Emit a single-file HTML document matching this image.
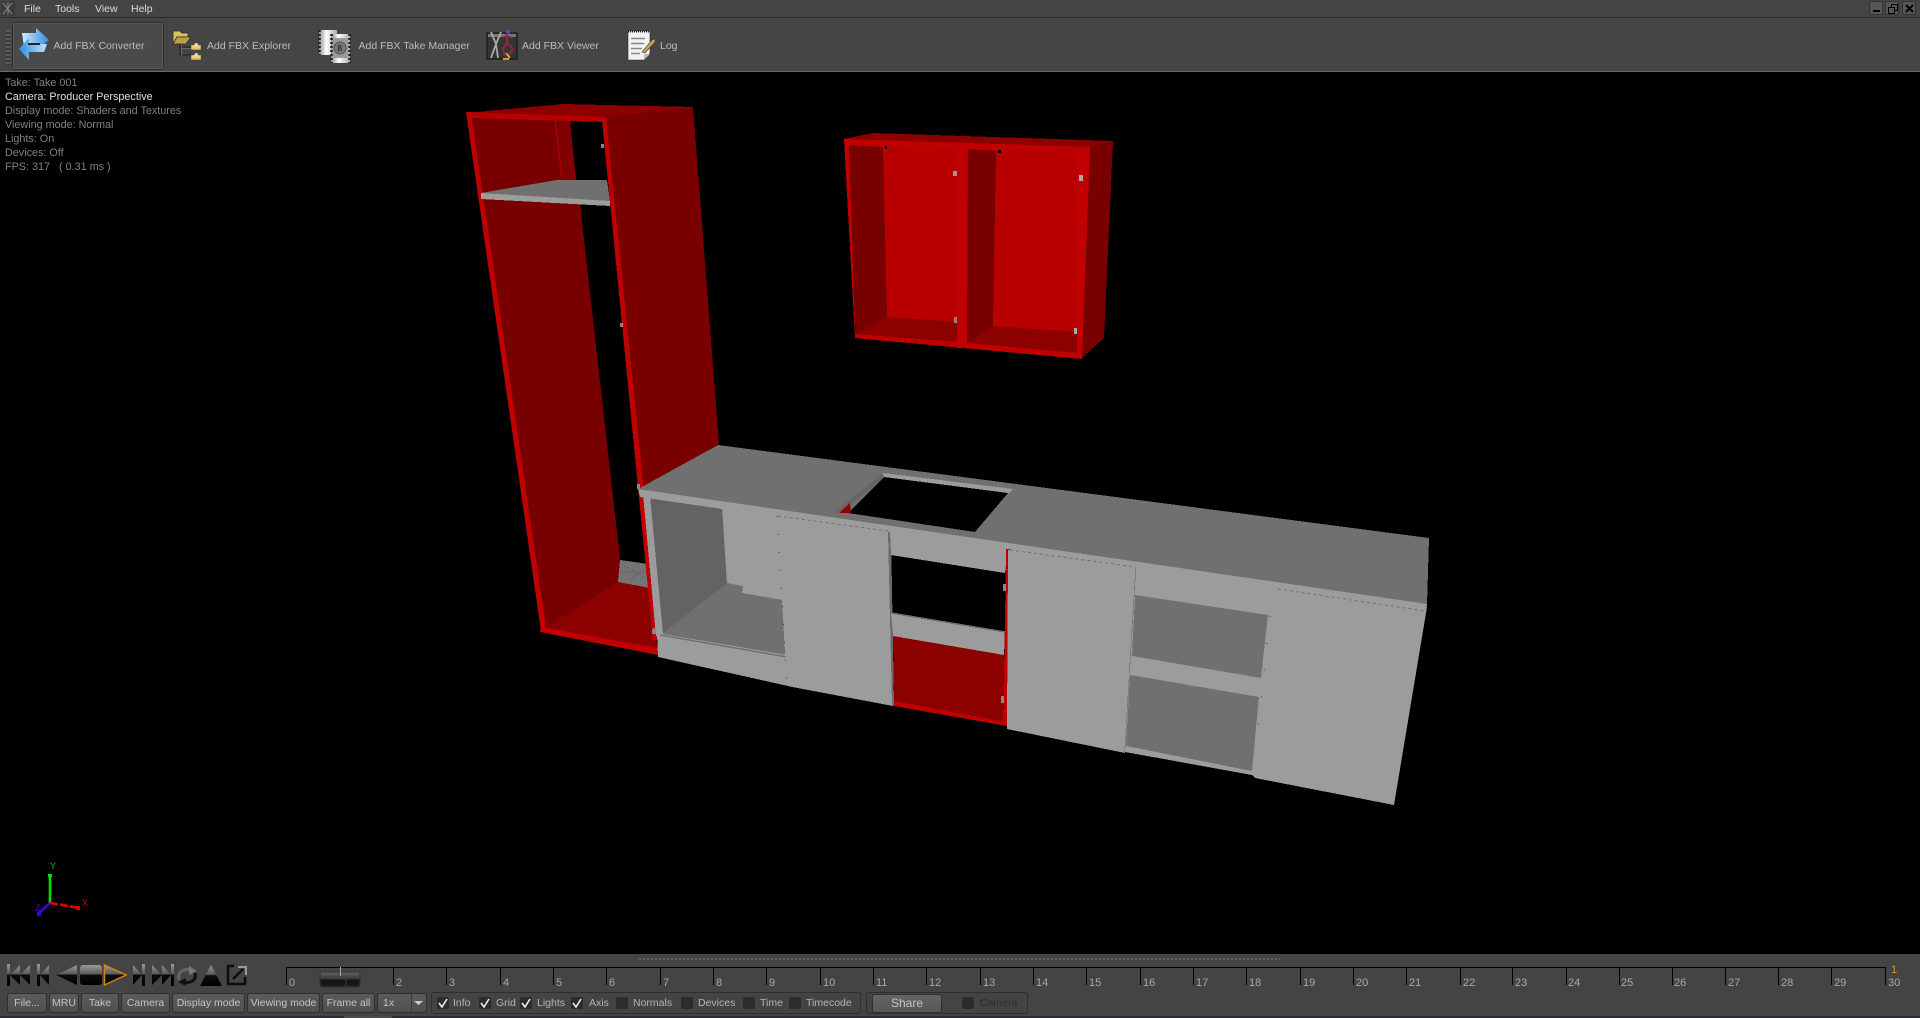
<!DOCTYPE html>
<html><head><meta charset="utf-8"><style>
html,body{margin:0;padding:0;width:1920px;height:1018px;overflow:hidden;background:#000}
body{position:relative;font:10.5px "Liberation Sans",sans-serif;color:#ccc}
.a{position:absolute}
.t{position:absolute;white-space:nowrap;line-height:14px;height:14px}
.btn{position:absolute;top:993px;height:18px;line-height:18px;text-align:center;background:linear-gradient(#5b5b5b,#505050);border:1px solid #2f2f2f;border-radius:3px;color:#c4c4c4;box-sizing:content-box}
.cb{position:absolute;top:997px;width:12px;height:12px;background:#2c2c2c;border-radius:2px}
.lb{position:absolute;top:996px;line-height:14px;color:#b4b4b4;white-space:nowrap}
.info{position:absolute;left:5px;line-height:14px;color:#808080;white-space:nowrap;font-size:10.8px}
.wb{position:absolute;top:1px;width:14px;height:14px;background:#565656;border:1px solid #333;border-radius:2px;box-sizing:border-box}
</style></head><body>
<!-- chrome backgrounds -->
<div class="a" style="left:0;top:0;width:1920px;height:17px;background:#444"></div>
<div class="a" style="left:0;top:17px;width:1920px;height:1px;background:#2c2c2c"></div>
<div class="a" style="left:0;top:18px;width:1920px;height:53px;background:#454545"></div>
<div class="a" style="left:0;top:71px;width:1920px;height:1px;background:#666"></div>
<div class="a" style="left:0;top:954px;width:1920px;height:62px;background:#444"></div>
<div class="a" style="left:0;top:1016px;width:1920px;height:2px;background:#2b2b33"></div>
<div class="a" style="left:344px;top:1016px;width:48px;height:2px;background:#4c4c4c"></div>

<!-- menu -->
<div class="t" style="left:24px;top:2px;color:#ddd">File</div>
<div class="t" style="left:55px;top:2px;color:#ddd">Tools</div>
<div class="t" style="left:95px;top:2px;color:#ddd">View</div>
<div class="t" style="left:131px;top:2px;color:#ddd">Help</div>

<!-- window buttons -->
<div class="wb" style="left:1869px"><div class="a" style="left:3px;top:8px;width:7px;height:2px;background:#000"></div></div>
<div class="wb" style="left:1885px"><div class="a" style="left:5px;top:2px;width:5px;height:5px;border:1px solid #000"></div><div class="a" style="left:2px;top:5px;width:5px;height:5px;border:1px solid #000;background:#565656"></div></div>
<div class="wb" style="left:1902px"><svg class="a" style="left:0;top:0" width="13" height="13"><path d="M3 3L10 10M10 3L3 10" stroke="#000" stroke-width="2"/></svg></div>

<!-- toolbar -->
<div class="a" style="left:12px;top:22px;width:150px;height:46px;border:1px solid #2e2e2e;outline:1px solid #585858;outline-offset:-2px;border-radius:3px;background:#4a4a4a"></div>
<div class="a" style="left:6px;top:30px;width:5px;height:36px;background:repeating-linear-gradient(#5a5a5a 0 2px,#3c3c3c 2px 4px)"></div>
<div class="t" style="left:53.500px;top:39px;color:#bbb">Add FBX Converter</div>
<div class="t" style="left:207px;top:39px;color:#bbb">Add FBX Explorer</div>
<div class="t" style="left:358.500px;top:39px;color:#bbb">Add FBX Take Manager</div>
<div class="t" style="left:522px;top:39px;color:#bbb">Add FBX Viewer</div>
<div class="t" style="left:660px;top:39px;color:#bbb">Log</div>

<svg class="a" style="left:0;top:0" width="700" height="72">
<defs>
<linearGradient id="bl" x1="0" y1="0" x2="1" y2="0"><stop offset="0" stop-color="#cfe8ff"/><stop offset="1" stop-color="#2f8fe0"/></linearGradient>
<linearGradient id="bl2" x1="0" y1="0" x2="1" y2="0"><stop offset="0" stop-color="#2f8fe0"/><stop offset="1" stop-color="#bfe0ff"/></linearGradient>
<linearGradient id="fy" x1="0" y1="0" x2="0" y2="1"><stop offset="0" stop-color="#fff3b0"/><stop offset="1" stop-color="#d9b84a"/></linearGradient>
<linearGradient id="fw" x1="0" y1="0" x2="1" y2="0"><stop offset="0" stop-color="#888"/><stop offset=".4" stop-color="#fff"/><stop offset="1" stop-color="#aaa"/></linearGradient>
</defs>
<!-- app icon -->
<rect x="1" y="1" width="14" height="15" fill="#3a3a3a"/><path d="M3 3L12 14M12 3L3 14M8 2V15" stroke="#888" stroke-width="1"/>
<!-- converter -->
<path d="M22 33H36V28L49 40L40 47H24Z" fill="url(#bl)"/>
<path d="M47 44L44 52H29V60L19 49L29 38V44Z" fill="url(#bl2)"/>
<rect x="28" y="43" width="12" height="2" fill="#222"/>
<!-- explorer -->
<path d="M173 41V31H180L182 33H188V37H177L174 43Z" fill="#d8bf60" stroke="#2a2a2a" stroke-width=".8"/>
<path d="M173 44L177 37H191L186 44Z" fill="#bfa040" stroke="#2a2a2a" stroke-width=".8"/>
<path d="M180 44V55H191M180 47H191" stroke="#1e1e1e" fill="none"/>
<path d="M180.500 44V55M181 47.500H191" stroke="#666" fill="none" transform="translate(1,1)"/>
<path d="M191 45H194L195 43H198V45H201V50H191Z" fill="url(#fy)" stroke="#444" stroke-width=".5"/>
<path d="M191 55H194L195 53H198V55H201V60H191Z" fill="url(#fy)" stroke="#444" stroke-width=".5"/>
<!-- take manager -->
<rect x="319" y="30" width="18" height="25" fill="url(#fw)"/>
<rect x="331" y="34" width="19" height="29" fill="url(#fw)"/>
<path d="M319.500 30V55M349.500 34V63M331.500 34V63" stroke="#222" stroke-width="2.500" stroke-dasharray="2 2"/>
<rect x="333" y="38" width="15" height="20" fill="#9a9a9a"/>
<circle cx="340" cy="48" r="6" fill="#777" stroke="#555"/>
<text x="337.500" y="51" font-size="8" fill="#111" font-family="Liberation Sans,sans-serif">8</text>
<!-- viewer -->
<rect x="487" y="33" width="30" height="26" fill="#343434" stroke="#111"/>
<rect x="488" y="34" width="28" height="3" fill="#787878"/>
<path d="M491 32L496 44L498 58M501 32L496 44L491 58" stroke="#a8a8a8" stroke-width="1.800" fill="none"/>
<path d="M507 34V43L503 49L505 56M507 43L513 49L508 56" stroke="#8a2a3a" stroke-width="2.200" fill="none"/>
<path d="M503 37L508 36L512 38" stroke="#8a2a3a" stroke-width="1.500" fill="none"/>
<circle cx="508" cy="32" r="2" fill="#2a60d8"/><path d="M503 59H509M506 53L510 58" stroke="#d8b030" stroke-width="1.800"/>
<!-- log -->
<path d="M628 31H650V53L644 60H628Z" fill="#f2f2f2" stroke="#2e2e2e" stroke-width=".6"/>
<path d="M628 31.500H650" stroke="#222" stroke-width="2" stroke-dasharray="1 1"/>
<path d="M631 38.500H645M631 43.500H644M631 48.500H642M631 53.500H640" stroke="#888" stroke-width="1.500"/>
<path d="M642 52L652 40L655 39L655 42L645 53Z" fill="#c9a45a" stroke="#4a3a20" stroke-width=".6"/>
<path d="M644 60V54H650Z" fill="#bbb"/>
</svg>

<!-- 3D viewport -->
<svg class="a" style="left:0;top:72px" width="1920" height="882" viewBox="0 72 1920 882" shape-rendering="crispEdges">
<!-- tall cabinet -->
<polygon points="466,113 563,104 693,107 606,118" fill="#8c0000"/>
<polygon points="468,116 570,120 576,181 481,195" fill="#780000"/>
<polygon points="570,120 576,180 562,180 555,120" fill="#800000"/>
<polygon points="479,197 580,204 620,559 618,582 545,630" fill="#780000"/>
<polygon points="620,560 648,564 650,588 618,582" fill="#747474"/>
<path d="M624 566L646 578M630 580L644 568M622 572L648 572" stroke="#555" stroke-width="1" stroke-dasharray="1 2"/>
<polygon points="618,582 650,588 658,653 542,630" fill="#8c0000"/>
<polygon points="605,117 693,107 719,444 643,488" fill="#7a0000"/>
<line x1="555" y1="120" x2="562" y2="179" stroke="#b80000" stroke-width="1"/>
<polygon points="466,112 605,117 606,122 470,118" fill="#b80000"/>
<polygon points="466,112 471,113 546,628 541,631" fill="#c00000"/>
<polygon points="541,627 658,648 658,655 540,632" fill="#c00000"/>
<polygon points="602,120 606,118 659,640 653,640" fill="#c00000"/>
<polygon points="481,193 557,180 607,180 610,201" fill="#707070"/>
<polygon points="481,193 610,201 610,206 481,199" fill="#9c9c9c"/>
<rect x="601" y="144" width="3" height="4" fill="#888"/><rect x="620" y="323" width="3" height="4" fill="#888"/><rect x="637" y="484" width="3" height="5" fill="#888"/><rect x="652" y="629" width="3" height="5" fill="#888"/>

<!-- upper cabinet -->
<polygon points="844,139 873,133 1113,141 1089,147" fill="#8c0000"/>
<polygon points="1089,147 1113,141 1104,338 1082,358" fill="#780000"/>
<polygon points="844,139 1090,147 1082,359 855,338" fill="#c00000"/>
<polygon points="884,146 908,147 1016,150 1089,147 1083,332 855,334" fill="#b80000"/>
<polygon points="849,145 883,147 887,317 855,334" fill="#780000"/>
<polygon points="855,334 887,317 957,322 957,342" fill="#8c0000"/>
<polygon points="968,149 996,151 993,326 967,343" fill="#780000"/>
<polygon points="967,343 993,326 1077,332 1077,353" fill="#8c0000"/>
<polygon points="956,143 964,143 964,348 957,348" fill="#c00000"/>
<polygon points="855,334 857,338 1080,358 1082,354 957,342" fill="#c00000"/>
<polygon points="1077,150 1090,147 1082,359 1077,358" fill="#c00000"/>
<rect x="953" y="171" width="4" height="5" fill="#999"/><rect x="1079" y="175" width="4" height="6" fill="#aaa"/><rect x="954" y="317" width="3" height="6" fill="#888"/><rect x="1074" y="328" width="3" height="6" fill="#aaa"/>
<rect x="885" y="146" width="2" height="3" fill="#000"/><rect x="998" y="150" width="3" height="3" fill="#000"/>

<!-- base cabinet -->
<polygon points="718,445 1429,538 1427,605 638,489" fill="#707070"/>
<!-- left compartment -->
<polygon points="648,496 724,505 780,514 784,602 727,590 668,632" fill="#9c9c9c"/>
<polygon points="648,496 722,506 727,584 660,636" fill="#636363"/>
<polygon points="727,583 743,586 742,593 783,600 788,658 662,634" fill="#707070"/>
<polygon points="643,494 650,496 663,634 656,636" fill="#9c9c9c"/>
<polygon points="657,633 787,655 788,686 658,657" fill="#9c9c9c"/>
<line x1="660" y1="635" x2="787" y2="657" stroke="#707070" stroke-width="1.500"/>
<polygon points="638,489 1427,604 1426,612 1136,570 777,517 640,497" fill="#9c9c9c"/>
<rect x="653" y="628" width="3" height="6" fill="#888"/>
<!-- hole -->
<polygon points="883,473 1013,489 1008,494 883,478" fill="#9c9c9c"/>
<polygon points="883,473 884,478 841,513 834,512" fill="#666"/>
<polygon points="884,477 1008,493 975,532 848,513" fill="#000"/>
<polygon points="839,513 850,503 851,513" fill="#8c0000"/>
<!-- door 1 -->
<polygon points="777,515 888,532 893,706 787,686" fill="#9c9c9c"/>
<polygon points="888,532 891,532 894,705 892,705" fill="#6b6b6b"/>
<line x1="778" y1="516" x2="888" y2="531" stroke="#707070" stroke-dasharray="3 3" stroke-width="1"/>
<line x1="777" y1="516" x2="787" y2="686" stroke="#444" stroke-dasharray="1 17" stroke-width="1"/>
<!-- middle -->
<polygon points="890,532 1008,549 1005,573 891,555" fill="#9c9c9c"/>
<polygon points="891,613 1005,632 1004,655 893,636" fill="#9c9c9c"/>
<line x1="891" y1="613" x2="1005" y2="632" stroke="#707070" stroke-width="1.500"/>
<polygon points="893,636 1004,655 1003,722 894,701" fill="#8c0000"/>
<polygon points="894,701 1006,722 1007,726 894,706" fill="#c00000"/>
<polygon points="1006,549 1010,549 1007,726 1003,722 1005,620" fill="#c00000"/>
<rect x="1003" y="584" width="3" height="7" fill="#888"/><rect x="1001" y="696" width="3" height="7" fill="#888"/>
<!-- door 2 -->
<polygon points="1008,550 1137,568 1125,753 1007,729" fill="#9c9c9c"/>
<line x1="1010" y1="550" x2="1136" y2="567" stroke="#707070" stroke-dasharray="3 3" stroke-width="1"/>
<line x1="1136" y1="568" x2="1125" y2="752" stroke="#6b6b6b" stroke-width="1.200"/>
<!-- right body -->
<polygon points="1136,568 1427,607 1394,805 1255,778 1252,775 1125,752" fill="#9c9c9c"/>
<polygon points="1135,595 1268,615 1261,678 1132,656" fill="#707070"/>
<polygon points="1130,675 1259,697 1252,771 1126,746" fill="#707070"/>
<line x1="1278" y1="589" x2="1425" y2="611" stroke="#707070" stroke-dasharray="3 3" stroke-width="1"/>
<line x1="1270" y1="616" x2="1256" y2="748" stroke="#444" stroke-dasharray="1 26" stroke-width="1"/>

<!-- axis -->
<g shape-rendering="auto">
<line x1="50" y1="903" x2="50" y2="875" stroke="#00e000" stroke-width="2.600"/><rect x="48" y="874" width="4" height="3" fill="#00e000"/>
<line x1="50" y1="903" x2="80" y2="908" stroke="#e80000" stroke-width="2.600" stroke-dasharray="8 2"/><rect x="76" y="906" width="4" height="4" fill="#e80000"/>
<line x1="50" y1="903" x2="38" y2="914" stroke="#4000e0" stroke-width="2.600"/><rect x="37" y="912" width="4" height="4" fill="#4000e0"/>
<text x="50" y="869" font-size="9" fill="#00c000" font-family="Liberation Sans,sans-serif">Y</text>
<text x="82" y="906" font-size="9" fill="#d00000" font-family="Liberation Sans,sans-serif">X</text>
<text x="35" y="911" font-size="9" fill="#4000e0" font-family="Liberation Sans,sans-serif">Z</text>
</g>
</svg>

<!-- info overlay -->
<div class="info" style="top:76px">Take: Take 001</div>
<div class="info" style="top:90px;color:#e0e0e0">Camera: Producer Perspective</div>
<div class="info" style="top:104px">Display mode: Shaders and Textures</div>
<div class="info" style="top:118px">Viewing mode: Normal</div>
<div class="info" style="top:132px">Lights: On</div>
<div class="info" style="top:146px">Devices: Off</div>
<div class="info" style="top:160px">FPS: 317 &nbsp; ( 0.31 ms )</div>

<!-- grip -->
<div class="a" style="left:639px;top:958px;width:641px;height:2px;background:repeating-linear-gradient(90deg,#5e5e5e 0 2px,#444 2px 4px)"></div>

<!-- transport + timeline -->
<svg class="a" style="left:0;top:954px" width="1920" height="40" viewBox="0 954 1920 40">
<defs><linearGradient id="tg" x1="0" y1="0" x2="0" y2="1"><stop offset="0" stop-color="#9a9a9a"/><stop offset=".45" stop-color="#5a5a5a"/><stop offset=".5" stop-color="#0c0c0c"/><stop offset="1" stop-color="#000"/></linearGradient>
<linearGradient id="sl" x1="0" y1="0" x2="0" y2="1"><stop offset="0" stop-color="#666"/><stop offset=".5" stop-color="#333"/><stop offset=".52" stop-color="#111"/><stop offset="1" stop-color="#1c1c1c"/></linearGradient></defs>
<g fill="url(#tg)">
<path d="M7 964H10V986H7ZM10 975L20 965V985ZM20 975L30 965V985Z"/>
<path d="M37 964H40V986H37ZM40 975L49 965V985Z"/>
<path d="M56 975L77 965V985Z"/>
<rect x="80" y="965" width="22" height="20" rx="3"/>
<path d="M133 965L142 975L133 985ZM142 964H145V986H142Z"/>
<path d="M152 965L162 975L152 985ZM162 965L171 975L162 985ZM171 964H174V986H171Z"/>
<path d="M200 986L211 965L222 986Z"/>
</g>
<path d="M104.500 965L126 975L104.500 985Z" fill="url(#tg)" stroke="#d8820f" stroke-width="1.500"/>
<path d="M179 980C177 971 185 968 192 970" fill="none" stroke="#666" stroke-width="3"/>
<path d="M189 966L197 971L189 975Z" fill="#777"/>
<path d="M195 973C197 981 189 984 183 982" fill="none" stroke="#111" stroke-width="3"/>
<path d="M186 978L178 982L186 986Z" fill="#111"/>
<path d="M234 966H228V984H245V977" fill="none" stroke="#0c0c0c" stroke-width="2.500"/>
<path d="M233 979L243 969" fill="none" stroke="#0c0c0c" stroke-width="2.500"/>
<path d="M238 967H246V975" fill="none" stroke="#999" stroke-width="2"/>

<!-- timeline -->
<g shape-rendering="crispEdges">
<line x1="287" y1="967.500" x2="1886" y2="967.500" stroke="#000"/>
<path stroke="#000" d="M286.500 967V985M393.500 967V985M446.500 967V985M500.500 967V985M553.500 967V985M606.500 967V985M660.500 967V985M713.500 967V985M766.500 967V985M820.500 967V985M873.500 967V985M926.500 967V985M980.500 967V985M1033.500 967V985M1086.500 967V985M1140.500 967V985M1193.500 967V985M1246.500 967V985M1300.500 967V985M1353.500 967V985M1406.500 967V985M1460.500 967V985M1512.500 967V985M1566.500 967V985M1619.500 967V985M1672.500 967V985M1725.500 967V985M1778.500 967V985M1831.500 967V985M1885.500 967V985"/>
</g>
<rect x="320" y="972" width="40" height="15" rx="2" fill="url(#sl)" stroke="#333"/>
<line x1="340.500" y1="967" x2="340.500" y2="985" stroke="#aaa" stroke-width="1" stroke-dasharray="9 100"/>
<g fill="#a8a8a8" font-size="11" font-family="Liberation Sans,sans-serif">
<text x="289" y="986">0</text><text x="343" y="986" fill="#3a3a3a">1</text><text x="396" y="986">2</text><text x="449" y="986">3</text><text x="503" y="986">4</text><text x="556" y="986">5</text><text x="609" y="986">6</text><text x="663" y="986">7</text><text x="716" y="986">8</text><text x="769" y="986">9</text><text x="823" y="986">10</text><text x="876" y="986">11</text><text x="929" y="986">12</text><text x="983" y="986">13</text><text x="1036" y="986">14</text><text x="1089" y="986">15</text><text x="1143" y="986">16</text><text x="1196" y="986">17</text><text x="1249" y="986">18</text><text x="1303" y="986">19</text><text x="1356" y="986">20</text><text x="1409" y="986">21</text><text x="1463" y="986">22</text><text x="1515" y="986">23</text><text x="1568" y="986">24</text><text x="1621" y="986">25</text><text x="1674" y="986">26</text><text x="1728" y="986">27</text><text x="1781" y="986">28</text><text x="1834" y="986">29</text><text x="1888" y="986">30</text>
<text x="1891" y="973" fill="#f09010">1</text>
</g>
</svg>

<!-- bottom buttons -->
<div class="btn" style="left:7px;width:38px">File...</div>
<div class="btn" style="left:49px;width:28px">MRU</div>
<div class="btn" style="left:81px;width:36px">Take</div>
<div class="btn" style="left:121px;width:47px">Camera</div>
<div class="btn" style="left:172px;width:71px">Display mode</div>
<div class="btn" style="left:247px;width:71px">Viewing mode</div>
<div class="btn" style="left:322px;width:51px">Frame all</div>
<div class="btn" style="left:377px;width:48px;text-align:left;text-indent:5px">1x</div>
<div class="a" style="left:411px;top:994px;width:1px;height:18px;background:#3a3a3a"></div>
<svg class="a" style="left:413px;top:999px" width="12" height="8"><path d="M1 2H10L5.500 6Z" fill="#ccc"/></svg>

<div class="a" style="left:431px;top:992px;width:428px;height:20px;border:1px solid #2f2f2f;border-radius:3px"></div>
<div class="a" style="left:866px;top:992px;width:160px;height:20px;border:1px solid #2f2f2f;border-radius:3px"></div>
<div class="btn" style="left:872px;top:994px;width:68px;height:17px;line-height:17px;background:linear-gradient(#646464,#585858);font-size:12px">Share</div>

<div class="cb" style="left:437px"></div><div class="cb" style="left:479px"></div><div class="cb" style="left:520px"></div><div class="cb" style="left:571px"></div>
<div class="cb" style="left:616px"></div><div class="cb" style="left:681px"></div><div class="cb" style="left:743px"></div><div class="cb" style="left:789px"></div><div class="cb" style="left:962px"></div>
<svg class="a" style="left:0;top:990px" width="600" height="24"><path d="M439 13L442 17L447 9M481 13L484 17L489 9M522 13L525 17L530 9M573 13L576 17L581 9" fill="none" stroke="#eee" stroke-width="1.600"/></svg>
<div class="lb" style="left:453px">Info</div>
<div class="lb" style="left:496px">Grid</div>
<div class="lb" style="left:537px">Lights</div>
<div class="lb" style="left:589px">Axis</div>
<div class="lb" style="left:633px">Normals</div>
<div class="lb" style="left:698px">Devices</div>
<div class="lb" style="left:760px">Time</div>
<div class="lb" style="left:806px">Timecode</div>
<div class="lb" style="left:980px;color:#2c2c2c">Camera</div>
</body></html>
